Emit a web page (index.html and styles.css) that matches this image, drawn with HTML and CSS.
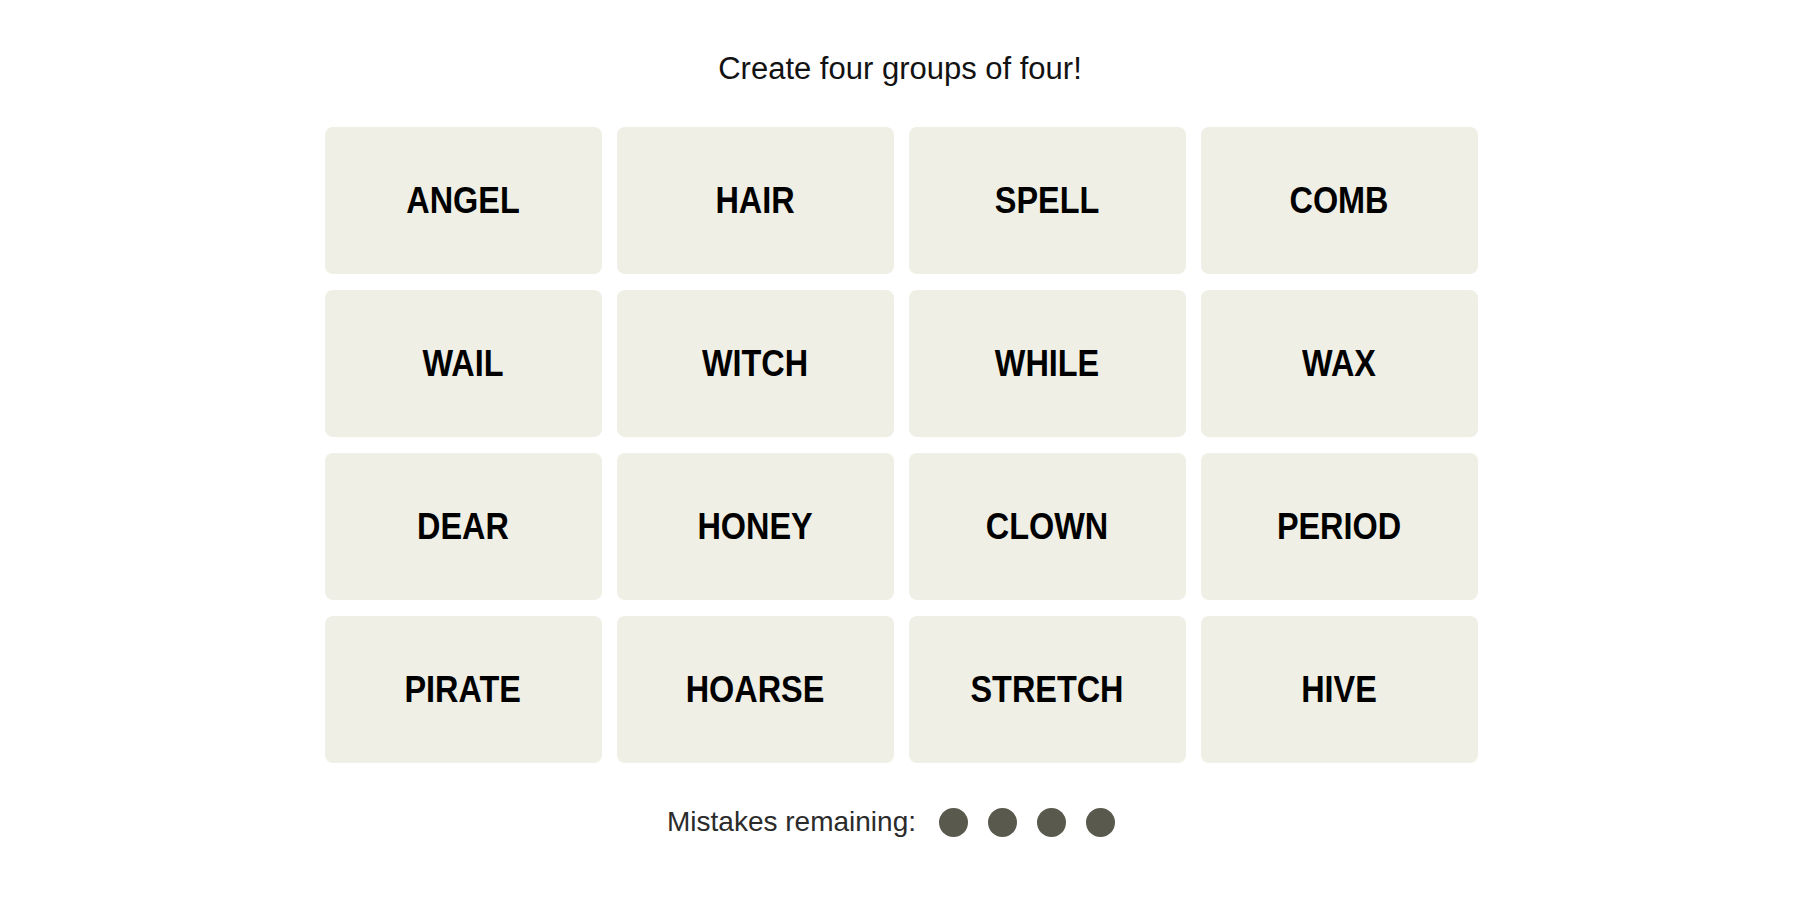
FILE: index.html
```html
<!DOCTYPE html>
<html lang="en">
<head>
    <meta charset="UTF-8">
    <meta name="viewport" content="width=device-width, initial-scale=1.0">
    <title>Connections</title>
    <link rel="stylesheet" href="styles.css">
</head>
<body>
    <main class="game">
        <p class="game-title">Create four groups of four!</p>

        <div class="board">
            <div class="tile"><span class="word">ANGEL</span></div>
            <div class="tile"><span class="word">HAIR</span></div>
            <div class="tile"><span class="word">SPELL</span></div>
            <div class="tile"><span class="word">COMB</span></div>
            <div class="tile"><span class="word">WAIL</span></div>
            <div class="tile"><span class="word">WITCH</span></div>
            <div class="tile"><span class="word">WHILE</span></div>
            <div class="tile"><span class="word">WAX</span></div>
            <div class="tile"><span class="word">DEAR</span></div>
            <div class="tile"><span class="word">HONEY</span></div>
            <div class="tile"><span class="word">CLOWN</span></div>
            <div class="tile"><span class="word">PERIOD</span></div>
            <div class="tile"><span class="word">PIRATE</span></div>
            <div class="tile"><span class="word">HOARSE</span></div>
            <div class="tile"><span class="word">STRETCH</span></div>
            <div class="tile"><span class="word">HIVE</span></div>
        </div>

        <div class="mistakes">
            <span class="mistakes-label">Mistakes remaining:</span>
            <div class="dots">
                <span class="dot"></span>
                <span class="dot"></span>
                <span class="dot"></span>
                <span class="dot"></span>
            </div>
        </div>
    </main>
</body>
</html>
```

FILE: styles.css
```css
* { box-sizing: border-box; }
body {
    margin: 0;
    background: #ffffff;
    color: #121212;
    font-family: 'Liberation Sans', Arial, sans-serif;
}

.game {
    display: flex;
    flex-direction: column;
    align-items: center;
    padding-top: 51px;
}

.game-title {
    margin: 0;
    font-size: 31px;
    line-height: 36px;
    font-weight: 300;
    color: #121212;
}

.board {
    display: grid;
    grid-template-columns: repeat(4, 277px);
    grid-auto-rows: 147px;
    column-gap: 15px;
    row-gap: 16px;
    margin-top: 40px;
    margin-left: 2px;
}
.tile {
    display: flex;
    align-items: center;
    justify-content: center;
    background-color: #efefe6;
    border-radius: 8px;
    font-size: 36px;
    font-weight: 700;
    color: #000000;
    user-select: none;
}
/* condensed look of the tile words */
.word {
    display: inline-block;
    transform: scaleX(0.9);
}

.mistakes {
    display: flex;
    align-items: center;
    gap: 23px;
    height: 30px;
    margin-top: 44px;
    padding-right: 18px;
}
.mistakes-label {
    font-size: 28px;
    line-height: 30px;
    color: #2b2b2b;
}
.dots {
    display: flex;
    gap: 20px;
}
.dot {
    width: 29px;
    height: 29px;
    border-radius: 50%;
    background-color: #5a594e;
}
```
